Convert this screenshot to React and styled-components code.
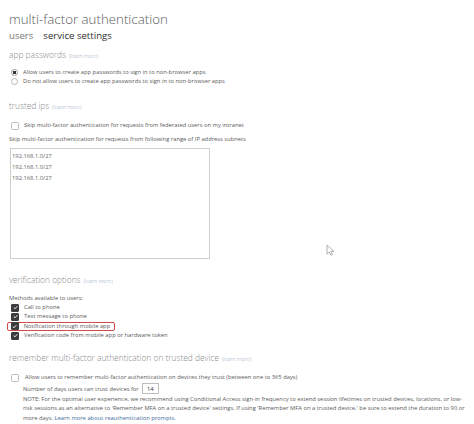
import React from "react";
import styled, { createGlobalStyle } from "styled-components";

const GlobalStyle = createGlobalStyle`
  html, body {
    margin: 0;
    padding: 0;
    background: #ffffff;
  }
  body {
    font-family: "Open Sans", "Noto Sans", sans-serif;
    color: #555;
  }
`;

const Page = styled.div`
  position: relative;
  width: 474px;
  height: 424px;
  overflow: hidden;
  padding: 9px 0 0 9px;
  box-sizing: border-box;
`;

const Title = styled.h1`
  margin: 0;
  height: 21px;
  font-size: 13.3px;
  line-height: 21px;
  font-weight: 300;
  color: #5c5c5c;
  white-space: nowrap;
`;

const Tabs = styled.div`
  display: flex;
  gap: 10px;
  height: 11px;
  font-size: 9.6px;
  line-height: 11px;
  white-space: nowrap;
`;

const Tab = styled.span`
  color: ${(p) => (p.active ? "#2e2e2e" : "#777")};
`;

const Heading = styled.h2`
  margin: ${(p) => p.gap || 14}px 0 0;
  height: 12px;
  font-size: 8.4px;
  line-height: 12px;
  font-weight: 300;
  color: #8c8c8c;
  white-space: nowrap;
`;

const LearnMore = styled.span`
  margin-left: 3px;
  font-size: 5.3px;
  color: #8ba0b8;
`;

const Group = styled.div`
  margin-top: ${(p) => p.gap || 0}px;
  display: flex;
  flex-direction: column;
`;

const Row = styled.label`
  display: flex;
  align-items: center;
  gap: ${(p) => p.gap || 5}px;
  height: ${(p) => p.h || 9}px;
  padding-left: 2px;
  font-size: 5.8px;
  line-height: 9px;
  color: #5a5a5a;
  white-space: nowrap;
  box-sizing: border-box;
  width: fit-content;
  ${(p) =>
    p.highlight &&
    `
    border: 1.3px solid #d24a4a;
    border-radius: 2px;
    margin-left: -2px;
    padding-left: 2.7px;
    padding-right: 4px;
  `}
`;

const Text = styled.div`
  margin-top: ${(p) => p.gap || 0}px;
  height: 9px;
  font-size: 5.8px;
  line-height: 9px;
  color: #5a5a5a;
  white-space: nowrap;
`;

const Radio = styled.span`
  width: 5px;
  height: 5px;
  border-radius: 50%;
  border: 1px solid ${(p) => (p.on ? "#9a9a9a" : "#b5b5b5")};
  background: ${(p) =>
    p.on ? "radial-gradient(circle, #333 0 45%, #fff 55%)" : "#fff"};
  flex: none;
`;

const Box = styled.span`
  width: 6px;
  height: 6px;
  border-radius: ${(p) => (p.on ? 1 : 1.5)}px;
  border: 1px solid ${(p) => (p.on ? "#3c3c3c" : "#bdbdbd")};
  background: ${(p) => (p.on ? "#3c3c3c" : "#fff")};
  flex: none;
  display: flex;
  align-items: center;
  justify-content: center;
`;

const IpBox = styled.div`
  margin-top: 4px;
  margin-left: 1px;
  width: 200px;
  height: 111px;
  border: 1px solid #cfcfcf;
  box-sizing: border-box;
  padding: 2px 0 0 1px;
`;

const Ip = styled.div`
  font-size: 5.8px;
  line-height: 11px;
  color: #666;
`;

const Indent = styled.div`
  padding-left: 14px;
`;

const DaysRow = styled.div`
  margin-top: 1px;
  display: flex;
  align-items: center;
  gap: 3px;
  height: 11px;
  font-size: 5.8px;
  color: #5a5a5a;
  white-space: nowrap;
`;

const DaysInput = styled.span`
  width: 17px;
  height: 11px;
  border: 1px solid #bdbdbd;
  box-sizing: border-box;
  display: flex;
  align-items: center;
  justify-content: center;
  font-size: 5.8px;
  color: #333;
`;

const Note = styled.p`
  margin: 1px 0 0;
  width: 448px;
  font-size: 5.8px;
  line-height: 9.2px;
  color: #5a5a5a;
`;

const NoteLink = styled.span`
  color: #3f6a99;
`;

const Cursor = styled.svg`
  position: absolute;
  left: 326px;
  top: 244px;
`;

const Check = () => (
  <svg width="5" height="5" viewBox="0 0 10 10">
    <path d="M1.5 5.2 L4 7.6 L8.6 2.4" fill="none" stroke="#fff" strokeWidth="1.8" />
  </svg>
);

const methods = [
  "Call to phone",
  "Text message to phone",
  "Notification through mobile app",
  "Verification code from mobile app or hardware token",
];

export default function App() {
  return (
    <Page>
      <GlobalStyle />
      <Title>multi-factor authentication</Title>
      <Tabs>
        <Tab>users</Tab>
        <Tab active>service settings</Tab>
      </Tabs>

      <Heading gap={8}>
        app passwords<LearnMore>(learn more)</LearnMore>
      </Heading>
      <Group gap={7}>
        <Row>
          <Radio on />
          Allow users to create app passwords to sign in to non-browser apps
        </Row>
        <Row>
          <Radio />
          Do not allow users to create app passwords to sign in to non-browser apps
        </Row>
      </Group>

      <Heading gap={14}>
        trusted ips<LearnMore>(learn more)</LearnMore>
      </Heading>
      <Group gap={9}>
        <Row gap={5}>
          <Box />
          Skip multi-factor authentication for requests from federated users on my intranet
        </Row>
      </Group>
      <Text gap={5}>
        Skip multi-factor authentication for requests from following range of IP address subnets
      </Text>
      <IpBox>
        <Ip>192.168.1.0/27</Ip>
        <Ip>192.168.1.0/27</Ip>
        <Ip>192.168.1.0/27</Ip>
      </IpBox>

      <Heading gap={15}>
        verification options<LearnMore>(learn more)</LearnMore>
      </Heading>
      <Text gap={8}>Methods available to users:</Text>
      <Group>
        {methods.map((m, i) => (
          <Row key={m} h={9.3} highlight={i === 2}>
            <Box on>
              <Check />
            </Box>
            {m}
          </Row>
        ))}
      </Group>

      <Heading gap={12}>
        remember multi-factor authentication on trusted device
        <LearnMore>(learn more)</LearnMore>
      </Heading>
      <Group gap={9}>
        <Row gap={6}>
          <Box />
          Allow users to remember multi-factor authentication on devices they trust (between one to 365 days)
        </Row>
      </Group>
      <Indent>
        <DaysRow>
          Number of days users can trust devices for
          <DaysInput>14</DaysInput>
        </DaysRow>
        <Note>
          NOTE: For the optimal user experience, we recommend using Conditional Access sign-in
          frequency to extend session lifetimes on trusted devices, locations, or low-risk
          sessions as an alternative to 'Remember MFA on a trusted device' settings. If using
          'Remember MFA on a trusted device,' be sure to extend the duration to 90 or more days.{" "}
          <NoteLink>Learn more about reauthentication prompts.</NoteLink>
        </Note>
      </Indent>

      <Cursor width="9" height="12" viewBox="0 0 9 12">
        <path d="M1 1 L1 10 L3.3 8 L5 11.3 L6.4 10.6 L4.8 7.4 L8 7.4 Z" fill="#fff" stroke="#9a9a9a" strokeWidth="0.8" />
      </Cursor>
    </Page>
  );
}
